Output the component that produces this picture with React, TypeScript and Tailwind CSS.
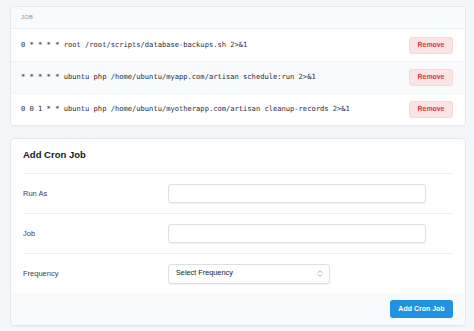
import React from "react";

const jobs = [
  "0 * * * * root /root/scripts/database-backups.sh 2>&1",
  "* * * * * ubuntu php /home/ubuntu/myapp.com/artisan schedule:run 2>&1",
  "0 0 1 * * ubuntu php /home/ubuntu/myotherapp.com/artisan cleanup-records 2>&1",
];

function Field({ label, children, border = true }: { label: string; children: React.ReactNode; border?: boolean }) {
  return (
    <div className={`mx-[12px] flex h-[40px] items-center ${border ? "border-t border-[#eceef1]" : ""}`}>
      <div className="w-[145px] text-[7.5px] text-[#374151]">{label}</div>
      {children}
    </div>
  );
}

export default function App() {
  return (
    <div
      className="min-h-[331px] w-[474px] bg-[#f4f7fa] pt-[6px] pb-[6px] pl-[10px] pr-[8px]"
      style={{ fontFamily: '"Liberation Sans", Arial, sans-serif' }}
    >
      <div className="overflow-hidden rounded-[4px] border border-[#e4e8ed] bg-white shadow-[0_1px_1px_rgba(0,0,0,0.03)]">
        <div className="flex h-[22px] items-center border-b border-[#eceef1] bg-[#f9fafb] px-[10px] text-[5.8px] tracking-[0.06em] text-[#8a919b]">
          JOB
        </div>
        {jobs.map((j, i) => (
          <div
            key={i}
            className={`flex h-[32px] items-center justify-between pl-[10px] pr-[12px] ${i === 1 ? "bg-[#f9fafb]" : "bg-white"} ${i > 0 ? "border-t border-[#f1f3f5]" : ""}`}
          >
            <span
              className="text-[7.1px] text-[#1f2937]"
              style={{ fontFamily: '"DejaVu Sans Mono", "Liberation Mono", monospace' }}
            >
              {j}
            </span>
            <button className="flex h-[17px] w-[44px] items-center justify-center rounded-[3px] border border-[#fcd5d5] bg-[#fde4e4] text-[6.9px] font-bold text-[#dc3540]">
              Remove
            </button>
          </div>
        ))}
      </div>

      <div className="mt-[12px] overflow-hidden rounded-[4px] border border-[#e4e8ed] bg-white shadow-[0_1px_1px_rgba(0,0,0,0.03)]">
        <div className="flex h-[34px] items-center px-[12px] pb-[2px] text-[9.5px] font-semibold text-[#111827]">
          Add Cron Job
        </div>
        <Field label="Run As">
          <input className="h-[19px] w-[258px] rounded-[3px] border border-[#dcdfe4] bg-white shadow-[0_1px_1px_rgba(0,0,0,0.05)]" />
        </Field>
        <Field label="Job">
          <input className="h-[19px] w-[258px] rounded-[3px] border border-[#dcdfe4] bg-white shadow-[0_1px_1px_rgba(0,0,0,0.05)]" />
        </Field>
        <Field label="Frequency">
          <div className="flex h-[20px] w-[162px] items-center justify-between rounded-[3px] border border-[#dcdfe4] bg-white pl-[7px] pr-[6px] shadow-[0_1px_1px_rgba(0,0,0,0.05)]">
            <span className="text-[7.3px] text-[#111827]">Select Frequency</span>
            <svg width="6" height="9" viewBox="0 0 6 9" fill="none" stroke="#a0a6ae" strokeWidth="0.9" strokeLinecap="round" strokeLinejoin="round">
              <path d="M1.2 3.3 L3 1.5 L4.8 3.3" />
              <path d="M1.2 5.7 L3 7.5 L4.8 5.7" />
            </svg>
          </div>
        </Field>
        <div className="flex h-[32px] items-center justify-end bg-[#f8fafc] pr-[12px]">
          <button className="flex h-[18px] w-[63px] items-center justify-center rounded-[3px] bg-[#2192e0] text-[7px] font-bold text-white">
            Add Cron Job
          </button>
        </div>
      </div>
    </div>
  );
}
